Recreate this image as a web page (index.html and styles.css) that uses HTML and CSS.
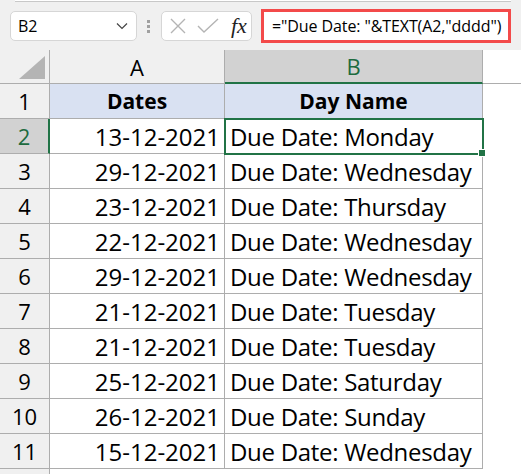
FILE: index.html
```html
<!DOCTYPE html>
<html>
<head>
  <title>Day Name</title>
  <link rel="stylesheet" href="styles.css">
</head>
<body>
  <div class="topline"></div>
  <div class="formula-bar">
    <div class="name-box">
      <span>B2</span>
      <svg class="chevron" width="12" height="8" viewBox="0 0 12 8"><path d="M1 1.5 L6 6.5 L11 1.5" fill="none" stroke="#444" stroke-width="1.2"/></svg>
    </div>
    <div class="dots"><i></i><i></i><i></i></div>
    <div class="fx-buttons">
      <svg width="18" height="18" viewBox="0 0 18 18"><path d="M2 2 L16 16 M16 2 L2 16" stroke="#b4b4b4" stroke-width="1.4" fill="none"/></svg>
      <svg width="22" height="18" viewBox="0 0 22 18"><path d="M1 9 L7 15 L21 2" stroke="#b4b4b4" stroke-width="1.4" fill="none"/></svg>
      <span class="fx">fx</span>
    </div>
    <div class="formula">="Due Date: "&amp;TEXT(A2,"dddd")</div>
  </div>

  <div class="sheet">
    <div class="corner"><span class="triangle"></span></div>
    <div class="col-head">A</div>
    <div class="col-head active">B</div>
    <div class="blank head"></div>

    <div class="row-head">1</div>
    <div class="cell title">Dates</div>
    <div class="cell title">Day Name</div>
    <div class="blank"></div>

    <div class="row-head active">2</div>
    <div class="cell date">13-12-2021</div>
    <div class="cell text selected">Due Date: Monday</div>
    <div class="blank"></div>

    <div class="row-head">3</div>
    <div class="cell date">29-12-2021</div>
    <div class="cell text">Due Date: Wednesday</div>
    <div class="blank"></div>

    <div class="row-head">4</div>
    <div class="cell date">23-12-2021</div>
    <div class="cell text">Due Date: Thursday</div>
    <div class="blank"></div>

    <div class="row-head">5</div>
    <div class="cell date">22-12-2021</div>
    <div class="cell text">Due Date: Wednesday</div>
    <div class="blank"></div>

    <div class="row-head">6</div>
    <div class="cell date">29-12-2021</div>
    <div class="cell text">Due Date: Wednesday</div>
    <div class="blank"></div>

    <div class="row-head">7</div>
    <div class="cell date">21-12-2021</div>
    <div class="cell text">Due Date: Tuesday</div>
    <div class="blank"></div>

    <div class="row-head">8</div>
    <div class="cell date">21-12-2021</div>
    <div class="cell text">Due Date: Tuesday</div>
    <div class="blank"></div>

    <div class="row-head">9</div>
    <div class="cell date">25-12-2021</div>
    <div class="cell text">Due Date: Saturday</div>
    <div class="blank"></div>

    <div class="row-head">10</div>
    <div class="cell date">26-12-2021</div>
    <div class="cell text">Due Date: Sunday</div>
    <div class="blank"></div>

    <div class="row-head">11</div>
    <div class="cell date">15-12-2021</div>
    <div class="cell text">Due Date: Wednesday</div>
    <div class="blank"></div>

    <div class="row-head"></div>
    <div class="blank"></div>
    <div class="blank"></div>
    <div class="blank"></div>
  </div>
</body>
</html>
```

FILE: styles.css
```css
body {
  margin: 0;
  background-color: #f0f0f0;
  color: #000;
  font-family: "Open Sans", sans-serif;
  overflow: hidden;
}

.topline {
  height: 1px;
  margin: 0 10px 0 15px;
  background-color: #fff;
  border-bottom: 1px solid #c8c8c8;
}

.formula-bar {
  display: flex;
  align-items: center;
  height: 48px;
  padding-left: 10px;
}

.name-box {
  display: flex;
  align-items: center;
  justify-content: space-between;
  box-sizing: border-box;
  width: 127px;
  height: 30px;
  padding: 0 8px 0 7px;
  background-color: #fff;
  border: 1px solid #d6d6d6;
  border-radius: 5px;
  font-size: 16px;
}

.dots {
  display: flex;
  flex-direction: column;
  gap: 2px;
  margin: 0 11px 0 10px;
}

.dots i {
  display: block;
  width: 3px;
  height: 3px;
  background-color: #a0a0a0;
}

.fx-buttons {
  display: flex;
  align-items: center;
  gap: 10px;
  box-sizing: border-box;
  width: 91px;
  height: 30px;
  padding-left: 7px;
  background-color: #fff;
  border: 1px solid #d6d6d6;
  border-radius: 5px;
}

.fx-buttons .fx {
  margin-left: 2px;
  font-family: "Liberation Serif", serif;
  font-style: italic;
  font-size: 22px;
  color: #222;
  line-height: 1;
}

.formula {
  display: flex;
  align-items: center;
  box-sizing: border-box;
  width: 250px;
  height: 34px;
  margin-left: 9px;
  padding-left: 8px;
  background-color: #fff;
  border: 3px solid #f34a4a;
  font-size: 16px;
  letter-spacing: -0.1px;
  white-space: nowrap;
}

.sheet {
  display: grid;
  grid-template-columns: 50px 175px 258px 1fr;
  grid-template-rows: 34px repeat(11, 35px) 6px;
  background-color: #fff;
}

.sheet > div {
  box-sizing: border-box;
  display: flex;
  align-items: center;
  white-space: nowrap;
}

.corner {
  justify-content: flex-end;
  align-items: flex-end !important;
  padding: 0 4px 4px 0;
  background-color: #f0f0f0;
  border-right: 1px solid #adadad;
  border-bottom: 1px solid #adadad;
}

.corner .triangle {
  width: 26px;
  height: 23px;
  background-color: #b4b4b4;
  clip-path: polygon(100% 0, 100% 100%, 0 100%);
}

.col-head {
  justify-content: center;
  background-color: #f0f0f0;
  border-right: 1px solid #adadad;
  border-bottom: 1px solid #adadad;
  font-size: 22px;
}

.col-head.active {
  background-color: #d2d2d2;
  color: #1d6b3f;
  border-bottom: 2px solid #217346;
}

.row-head {
  justify-content: center;
  background-color: #f0f0f0;
  border-right: 1px solid #adadad;
  border-bottom: 1px solid #adadad;
  font-size: 22px;
}

.row-head.active {
  background-color: #d2d2d2;
  color: #1d6b3f;
  border-right: 2px solid #217346;
}

.blank.head {
  border-bottom: 1px solid #adadad;
}

.cell {
  border-right: 1px solid #adadad;
  border-bottom: 1px solid #adadad;
  font-size: 24px;
}

.cell.title {
  justify-content: center;
  background-color: #d9e1f2;
  font-size: 21px;
  font-weight: 700;
}

.cell.date {
  justify-content: flex-end;
  padding-right: 4px;
}

.cell.text {
  padding-left: 5px;
  letter-spacing: -0.3px;
}

.cell.selected {
  position: relative;
  z-index: 1;
  outline: 2px solid #217346;
  outline-offset: -1px;
}

.cell.selected::after {
  content: "";
  position: absolute;
  right: -4px;
  bottom: -4px;
  width: 6px;
  height: 6px;
  background-color: #217346;
  border: 1px solid #fff;
}
```
